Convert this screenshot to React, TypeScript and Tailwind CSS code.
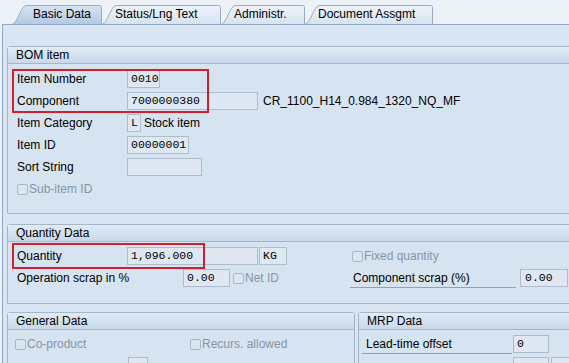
import React from "react";

type Tab = { label: string; w: number; pl: string; active?: boolean };

const tabs: Tab[] = [
  { label: "Basic Data", w: 90, pl: "pl-[21px]", active: true },
  { label: "Status/Lng Text", w: 119, pl: "pl-[13px]" },
  { label: "Administr.", w: 84, pl: "pl-[13px]" },
  { label: "Document Assgmt", w: 128, pl: "pl-[13px]" },
];

function TabItem({ tab, idx }: { tab: Tab; idx: number }) {
  const W = tab.w;
  const H = 19;
  const d = `M0.5,${H} C5,${H} 9,1 14,0.5 L${W - 2.5},0.5 Q${W - 0.5},0.5 ${W - 0.5},2.5 L${W - 0.5},${H}`;
  const gid = `tabgrad${idx}`;
  return (
    <div
      className={`relative h-[19px] shrink-0 whitespace-nowrap ${tab.pl} leading-[19px] text-[12px] text-black`}
      style={{ width: W }}
    >
      <svg className="absolute inset-0" width={W} height={H}>
        <defs>
          <linearGradient id={gid} x1="0" y1="0" x2="0" y2="1">
            <stop offset="0" stopColor={tab.active ? "#d6e4f3" : "#eef3f9"} />
            <stop offset="1" stopColor={tab.active ? "#b3c9e2" : "#d8e3ef"} />
          </linearGradient>
        </defs>
        <path d={d} fill={`url(#${gid})`} stroke="#98adc5" strokeWidth="1" />
      </svg>
      <span className="relative">{tab.label}</span>
    </div>
  );
}

function Field({
  value = "",
  className = "",
}: {
  value?: string;
  className?: string;
}) {
  return (
    <div
      className={`h-[18px] shrink-0 border border-[#aebdcd] bg-[#dfe8f2] px-[3px] font-['Liberation_Mono',monospace] text-[11.5px] leading-[16px] text-black whitespace-nowrap overflow-hidden ${className}`}
    >
      {value}
    </div>
  );
}

function Check({ label, className = "" }: { label: string; className?: string }) {
  return (
    <div className={`flex items-center text-[#8795a6] ${className}`}>
      <div className="w-[11px] h-[11px] border border-[#a9b8c8] bg-[#dbe5f0] rounded-[2px] mr-[1px]" />
      <span>{label}</span>
    </div>
  );
}

function Row({ children, className = "" }: { children: React.ReactNode; className?: string }) {
  return <div className={`flex items-center h-[22px] whitespace-nowrap ${className}`}>{children}</div>;
}

function Group({
  title,
  className = "",
  bodyClass = "",
  children,
}: {
  title: string;
  className?: string;
  bodyClass?: string;
  children: React.ReactNode;
}) {
  return (
    <div className={`border border-[#a3b6cb] rounded-tl-[3px] bg-[#d6e3f1] ${className}`}>
      <div className="h-[17px] bg-linear-to-b from-[#e2ebf5] to-[#c8d8ea] border-b border-[#a3b6cb] pl-[8px] leading-[16px]">
        {title}
      </div>
      <div className={bodyClass}>{children}</div>
    </div>
  );
}

export default function App() {
  return (
    <div className="w-[569px] h-[363px] overflow-hidden bg-[#edf2f8] font-['Liberation_Sans',Arial,sans-serif] text-[12px] text-black">
      {/* tab strip */}
      <div className="h-[24px] flex items-end pl-[12px]">
        {tabs.map((t, i) => (
          <TabItem key={t.label} tab={t} idx={i} />
        ))}
      </div>

      {/* panel */}
      <div className="ml-[2px] w-[600px] h-[339px] border-t border-l border-[#8fa7c2] bg-[#d9e5f2] pl-[4px] pt-[21px]">
        <Group title="BOM item" bodyClass="pl-[9px] pt-[4px] pb-[13px]">
          <div className="relative">
            <div className="absolute left-[-5px] top-[1px] w-[197px] h-[44px] border-2 border-[#d21f2b]" />
            <Row>
              <div className="w-[110px]">Item Number</div>
              <Field value="0010" className="w-[33px]" />
            </Row>
            <Row>
              <div className="w-[110px]">Component</div>
              <Field value="7000000380" className="w-[131px]" />
              <div className="ml-[5px]">CR_1100_H14_0.984_1320_NQ_MF</div>
            </Row>
          </div>
          <Row>
            <div className="w-[110px]">Item Category</div>
            <Field value="L" className="w-[14px] px-[2px]" />
            <div className="ml-[3px]">Stock item</div>
          </Row>
          <Row>
            <div className="w-[110px]">Item ID</div>
            <Field value="00000001" className="w-[62px]" />
          </Row>
          <Row>
            <div className="w-[110px]">Sort String</div>
            <Field className="w-[75px]" />
          </Row>
          <Row>
            <Check label="Sub-item ID" />
          </Row>
        </Group>

        <Group title="Quantity Data" className="mt-[10px]" bodyClass="pl-[9px] pt-[3px] pb-[14px]">
          <div className="relative">
            <div className="absolute left-[-5px] top-[-2px] w-[193px] h-[26px] border-2 border-[#d21f2b]" />
            <Row>
              <div className="w-[333px] flex items-center">
                <div className="w-[110px]">Quantity</div>
                <Field value="1,096.000" className="w-[131px]" />
                <Field value="KG" className="w-[28px] ml-[1px]" />
              </div>
              <Check label="Fixed quantity" className="ml-[2px]" />
            </Row>
          </div>
          <Row>
            <div className="w-[333px] flex items-center">
              <div className="w-[166px]">Operation scrap in %</div>
              <Field value="0.00" className="w-[47px]" />
              <Check label="Net ID" className="ml-[3px]" />
            </div>
            <div className="w-[166px] h-[20px] border-b border-[#8ea2b8] pl-[3px] leading-[20px]">
              Component scrap (%)
            </div>
            <Field value="0.00" className="w-[48px] ml-[4px] px-[4px]" />
          </Row>
        </Group>

        <div className="flex gap-[3px] mt-[8px]">
          <Group title="General Data" className="w-[348px] rounded-tr-[3px]" bodyClass="pl-[7px] pt-[3px]">
            <Row>
              <Check label="Co-product" className="w-[175px]" />
              <Check label="Recurs. allowed" />
            </Row>
            <Row>
              <div className="w-[113px]" />
              <Field className="w-[20px]" />
            </Row>
          </Group>
          <Group title="MRP Data" className="flex-1" bodyClass="pl-[3px] pt-[3px]">
            <Row>
              <div className="w-[150px] h-[20px] border-b border-[#8ea2b8] pl-[4px] leading-[20px]">
                Lead-time offset
              </div>
              <Field value="0" className="w-[36px] ml-[1px]" />
            </Row>
            <Row>
              <div className="w-[151px]" />
              <Field className="w-[36px]" />
              <Field className="w-[30px] ml-[2px]" />
            </Row>
          </Group>
        </div>
      </div>
    </div>
  );
}
